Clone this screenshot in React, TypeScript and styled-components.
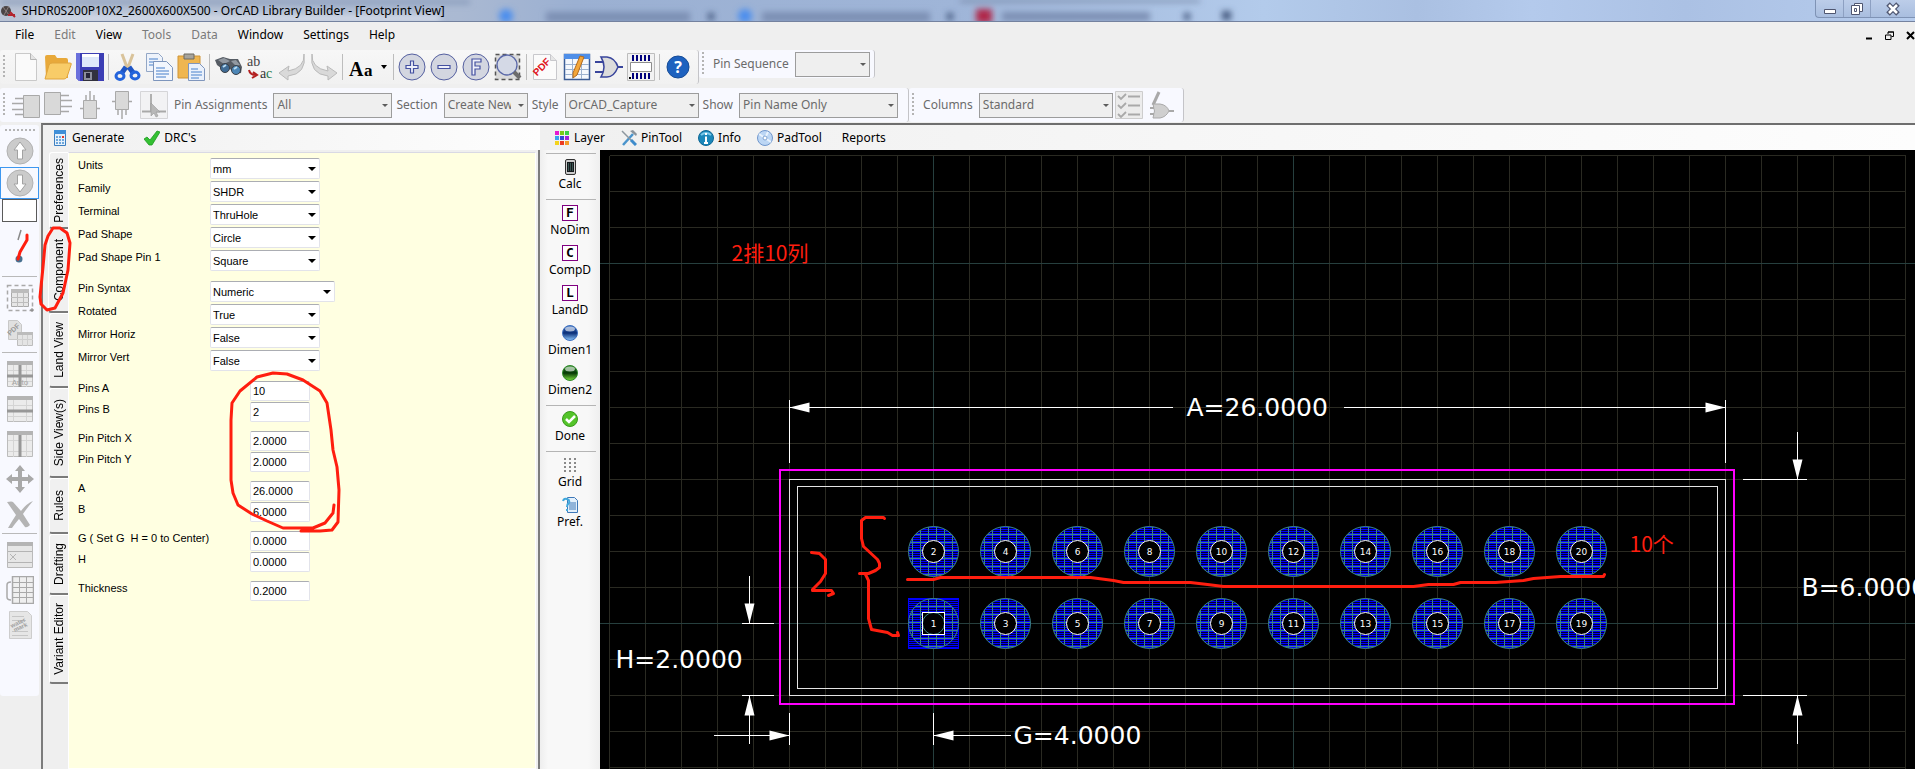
import React from "react";
import styled, { createGlobalStyle, css } from "styled-components";

const UI_FONT = `"Noto Sans", "Open Sans", sans-serif`;
const FORM_FONT = `"Liberation Sans", Arial, sans-serif`;
const RED = "#ff1e0f";

const GlobalStyle = createGlobalStyle`
  * { box-sizing: border-box; }
  body { margin: 0; background: #efefef; }
  button, input, select { font: inherit; color: inherit; margin: 0; }
  button { border: 0; padding: 0; background: none; }
  svg { display: block; flex: none; }
`;

const Window = styled.div`
  position: relative;
  display: flex;
  flex-direction: column;
  min-height: 100vh;
  overflow: hidden;
  background: #efefef;
  font: 12px/16px ${UI_FONT};
  color: #000;
`;

/* ---------- title bar ---------- */

const TitleBar = styled.header`
  position: relative;
  display: flex;
  align-items: flex-start;
  height: 22px;
  overflow: hidden;
  border-bottom: 1px solid #74829f;
  background: linear-gradient(90deg, #b9c3d4 0, #aab9d2 24%, #9bb0d2 30%, #9fb5d8 50%, #b3cbeb 66%, #aac0e2 74%, #b4caec 80%, #abc1e4 88%, #b6cced 100%);
`;

const Backdrop = styled.svg`
  position: absolute;
  left: 0;
  top: 0;
  width: 100%;
  height: 21px;
`;

const AppTitle = styled.h1`
  position: relative;
  display: flex;
  align-items: center;
  gap: 6px;
  flex: 1;
  margin: 0;
  height: 21px;
  font-size: 12px;
  font-weight: 400;
  white-space: pre;
`;

const WindowControls = styled.div`
  position: relative;
  display: flex;
  height: 18px;
  border: 1px solid #7f93b5;
  border-top: 0;
  border-right: 0;
  border-radius: 0 0 0 4px;
  background: linear-gradient(#bccde9, #a9bedf);
`;

const WindowButton = styled.button<{ $wide?: boolean }>`
  display: flex;
  justify-content: center;
  align-items: center;
  width: ${(p) => (p.$wide ? 45 : 27)}px;
  & + & { border-left: 1px solid #8da0c2; }
`;

/* ---------- menu ---------- */

const MenuBar = styled.nav`
  display: flex;
  align-items: center;
  height: 28px;
  padding: 0 0 2px 5px;
`;

const MenuItem = styled.button`
  padding: 0 10px;
  &:disabled { color: #7a7a7a; }
`;

const DocumentControls = styled.div`
  display: flex;
  gap: 12px;
  margin-left: auto;
`;

/* ---------- toolbars ---------- */

const ToolbarRow = styled.div`
  display: flex;
  align-items: flex-start;
  height: 38px;
`;

const Toolbar = styled.div<{ $tone?: "gray"; $short?: boolean; $end?: number }>`
  display: flex;
  align-items: center;
  height: ${(p) => (p.$short ? 28 : 34)}px;
  padding-right: ${(p) => p.$end ?? 4}px;
  border-right: 1px solid #c4c4c8;
  border-radius: 3px;
  background: ${(p) => (p.$tone === "gray" ? "linear-gradient(#f7f7f7, #f1f1f1)" : "#f8f9ff")};
  color: #6b6b6b;
`;

const Grip = styled.i`
  width: 2px;
  height: 24px;
  margin: 0 5px 0 3px;
  background: repeating-linear-gradient(#b4b4b4 0 2px, transparent 2px 4px);
`;

const ToolButton = styled.button<{ $narrow?: boolean }>`
  display: flex;
  justify-content: center;
  align-items: center;
  width: ${(p) => (p.$narrow ? 14 : 32)}px;
  height: 32px;
`;

const ToolSeparator = styled.i`
  width: 1px;
  height: 26px;
  margin: 0 2px;
  background: #bdbdbd;
`;

const ToolLabel = styled.label`
  margin: 0 6px 0 4px;
  white-space: nowrap;
`;

const ToolSelectBox = styled.span<{ $width: number }>`
  position: relative;
  width: ${(p) => p.$width}px;
  height: 25px;
  &::after {
    content: "";
    position: absolute;
    right: 4px;
    top: 11px;
    border: 3px solid transparent;
    border-top-color: #5c5c5c;
  }
`;

const ToolSelectInput = styled.select`
  appearance: none;
  width: 100%;
  height: 100%;
  padding: 0 16px 0 3px;
  border: 1px solid #9c9c9c;
  border-radius: 0;
  background: #efefef;
  color: #6b6b6b;
  opacity: 1;
`;

/* ---------- workspace ---------- */

const Workspace = styled.div`
  display: flex;
  flex: 1;
  margin-top: -3px;
`;

const Rail = styled.aside`
  display: flex;
  flex-direction: column;
  align-items: center;
  align-self: flex-start;
  width: 39px;
  margin: 2px 2px 0 0;
  padding-bottom: 54px;
  border-radius: 3px;
  background: #f8f9ff;
`;

const RailGrip = styled.i`
  width: 30px;
  height: 2px;
  margin: 4px 0;
  background: repeating-linear-gradient(90deg, #b4b4b4 0 2px, transparent 2px 4px);
`;

const RailButton = styled.button<{ $active?: boolean; $tall?: boolean }>`
  display: flex;
  justify-content: center;
  align-items: center;
  width: 39px;
  height: ${(p) => (p.$tall ? 52 : 35)}px;
  ${(p) =>
    p.$active !== undefined &&
    css`
      height: 32px;
      border: 1px solid ${p.$active ? "#3d97f0" : "transparent"};
    `}
`;

const RailInput = styled.input`
  width: 35px;
  height: 23px;
  border: 1px solid #5a5a5a;
  background: #fff;
`;

const RailSeparator = styled.i`
  width: 35px;
  height: 1px;
  margin: 2px 0 3px;
  background: #b9b9b9;
`;

const Frame = styled.main`
  display: flex;
  flex: 1;
  min-width: 0;
  border-top: 2px solid #6e6e6e;
  border-left: 2px solid #7c7c7c;
`;

const SidePanel = styled.section`
  display: flex;
  flex-direction: column;
  width: 497px;
  flex: none;
`;

const PaneHeader = styled.div<{ $pad: number }>`
  display: flex;
  align-items: center;
  height: 25px;
  padding-left: ${(p) => p.$pad}px;
  background: linear-gradient(90deg, #f0f0f0, #fdfdfd);
`;

const PaneButton = styled.button`
  display: flex;
  align-items: center;
  gap: 4px;
  margin-right: 16px;
  &:last-child { margin-left: 4px; }
`;

const PanelBody = styled.div`
  display: flex;
  flex: 1;
  padding: 2px 1px 0 5px;
  border-right: 2px solid #7c7c7c;
  background: #efefef;
`;

const TabStrip = styled.div`
  display: flex;
  flex-direction: column;
  align-items: flex-end;
  width: 20px;
`;

const SideTab = styled.button<{ $length: number; $selected?: boolean }>`
  display: flex;
  align-items: center;
  justify-content: center;
  width: ${(p) => (p.$selected ? 20 : 19)}px;
  height: ${(p) => p.$length}px;
  border-top: 1px solid #fff;
  border-left: 1px solid #fff;
  border-bottom: 2px solid #7a7a7a;
  border-radius: 3px 0 0 3px;
  background: #f0f0f0;
  font: 12px/16px ${FORM_FONT};
`;

const TabText = styled.span`
  writing-mode: vertical-rl;
  transform: rotate(180deg);
  white-space: nowrap;
`;

const Form = styled.form`
  display: flex;
  flex-direction: column;
  gap: 8px;
  flex: 1;
  margin-right: 1px;
  padding: 5px 0 0 9px;
  border: 1px solid #fff;
  border-top: 1px solid #d9d9e4;
  background: #ffffe1;
  font: 11px/14px ${FORM_FONT};
`;

const FieldGroup = styled.div`
  display: grid;
`;

const Row = styled.div<{ $kind: "select" | "input" }>`
  display: grid;
  grid-template-columns: ${(p) => (p.$kind === "select" ? 132 : 172)}px auto;
  justify-content: start;
  height: ${(p) => (p.$kind === "select" ? 23 : 21)}px;
`;

const FieldSelectBox = styled.span<{ $wide?: boolean }>`
  position: relative;
  width: ${(p) => (p.$wide ? 125 : 110)}px;
  height: 21px;
  &::after {
    content: "";
    position: absolute;
    right: 4px;
    top: 9px;
    border: 4px solid transparent;
    border-top-color: #000;
    border-bottom-width: 0;
  }
`;

const boxStyle = css`
  width: 100%;
  border: 1px solid #e2e3ea;
  border-top-color: #abadb3;
  border-radius: 2px;
  background: #fff;
`;

const FieldSelect = styled.select`
  ${boxStyle}
  appearance: none;
  height: 21px;
  padding: 0 14px 0 2px;
`;

const FieldInput = styled.input`
  ${boxStyle}
  width: 60px;
  height: 20px;
  padding: 0 2px;
`;

/* ---------- drawing pane ---------- */

const DrawingPane = styled.section`
  display: flex;
  flex-direction: column;
  flex: 1;
  min-width: 0;
`;

const DrawingBody = styled.div`
  display: flex;
  flex: 1;
`;

const ToolStrip = styled.div`
  display: flex;
  flex-direction: column;
  width: 60px;
  flex: none;
  padding-left: 4px;
  background: linear-gradient(90deg, #eeeeee 0, #f8f8f8 8px, #f8f8f8 48px, #efefef 100%);
`;

const StripSeparator = styled.i`
  width: 50px;
  height: 1px;
  margin: 3px 0 2px 2px;
  background: #b5b5b5;
`;

const StripButton = styled.button`
  display: flex;
  flex-direction: column;
  align-items: center;
  gap: 1px;
  width: 52px;
  height: 40px;
  padding-top: 3px;
`;

const LetterBox = styled.b`
  width: 16px;
  height: 16px;
  border: 1px solid #800080;
  background: #fff;
  font: bold 13px/14px "DejaVu Sans Mono", monospace;
`;

const Canvas = styled.svg`
  flex: 1 1 0;
  width: 0;
  min-width: 0;
  background: #000;
  overflow: hidden;
`;

const DimText = styled.text`
  font: 25px "DejaVu Sans", Verdana, sans-serif;
  fill: #fff;
`;

const PinText = styled.text`
  font: 9px "DejaVu Sans", Verdana, sans-serif;
  fill: #fff;
  text-anchor: middle;
`;

const NoteText = styled.text`
  font: 21px "Noto Sans CJK SC", sans-serif;
  fill: ${RED};
`;

const MarkupLayer = styled.svg`
  position: absolute;
  left: 0;
  top: 0;
  width: 100%;
  height: 100%;
  pointer-events: none;
`;

const Pen = styled.path`
  fill: none;
  stroke: ${RED};
  stroke-width: 3px;
  stroke-linecap: round;
  stroke-linejoin: round;
`;

/* ---------- icons ---------- */

const Icon = ({ size = 28, children }: { size?: number; children: React.ReactNode }) => (
  <svg width={size} height={size} viewBox={`0 0 ${size} ${size}`} fill="none" aria-hidden="true">
    {children}
  </svg>
);

const NewIcon = () => (
  <Icon>
    <path d="M3.500 .5h15l6 6v21h-21z" fill="#fafafa" stroke="#c9c9c9" />
    <path d="M18.500 .5v6h6" fill="#e4e4e4" stroke="#b5b5b5" />
  </Icon>
);
const OpenIcon = () => (
  <Icon>
    <path d="M1 4q0-2 2-2h8l2 3h9q2 0 2 2v18H2z" fill="#e8a93a" />
    <path d="M5 12q1-2 3-2h18q2 0 1 2l-4 12q-1 2-3 2H1z" fill="#f8cc68" stroke="#e0a43c" />
  </Icon>
);
const SaveIcon = () => (
  <Icon>
    <path d="M0 0h28v28H3l-3-3z" fill="#3c3eb4" />
    <path d="M0 0h4v28H3l-3-3z" fill="#6a70dc" />
    <path d="M6 1h17v13H6z" fill="#dfe9fa" />
    <path d="M6 1h17v3H6z" fill="#fff" />
    <path d="M7 17h15v11H7z" fill="#31313d" />
    <path d="M8 19h8v8H8z" fill="#8d8f9c" />
    <path d="M10 20h4v5h-4z" fill="#26263a" />
  </Icon>
);
const CutIcon = () => (
  <Icon>
    <path d="M9 1l6 16M20 1l-6 16" stroke="#d9c39a" strokeWidth="3" />
    <path d="M13 14l-5 7M16 14l5 7" stroke="#1f55c4" strokeWidth="5" />
    <ellipse cx="7" cy="23" rx="4" ry="3.500" stroke="#2464dc" strokeWidth="3" />
    <ellipse cx="22" cy="22.500" rx="4" ry="3.500" stroke="#2464dc" strokeWidth="3" />
  </Icon>
);
const CopyIcon = () => (
  <Icon>
    <path d="M1.500 .5h12l4 4v14h-16z" fill="#eef3fb" stroke="#93a7c6" />
    <path d="M4 6h9M4 9h11M4 12h8" stroke="#7fa6dc" strokeWidth="1.500" />
    <path d="M8.500 8.500h13l6 6v13h-19z" fill="#f2f6fd" stroke="#7d95bc" />
    <path d="M11 15h9M11 18h13M11 21h13M11 24h10" stroke="#7fa6dc" strokeWidth="1.500" />
  </Icon>
);
const PasteIcon = () => (
  <Icon>
    <path d="M1 3h22v22H1z" fill="#efb650" stroke="#cf9436" />
    <path d="M7 1h10v5H7z" fill="#a7a49c" stroke="#6e6a60" />
    <path d="M11.500 10.500h11l5 5v12h-16z" fill="#eaf1fc" stroke="#8096bc" />
    <path d="M14 16h7M14 19h11M14 22h11M14 25h8" stroke="#7fa6dc" strokeWidth="1.500" />
  </Icon>
);
const FindIcon = () => (
  <Icon>
    <path d="M1 7l8-3 7 2 8 0 4 8-1 6-6 1-5-5-5 2-8-6z" fill="#565c64" />
    <path d="M4 7l6-2 6 3-6 3zM17 8l5-1 4 5-4 1z" fill="#9299a1" />
    <circle cx="11" cy="15" r="4.500" fill="#3f6b94" stroke="#3a3f46" />
    <circle cx="22" cy="17" r="4.500" fill="#4c86b6" stroke="#3a3f46" />
    <path d="M9 14l3-2M20 16l3-2" stroke="#b9dcf2" strokeWidth="2" />
  </Icon>
);
const ReplaceIcon = () => (
  <Icon>
    <text x="1" y="13" fontFamily="Liberation Serif, serif" fontSize="14" fill="#444">ab</text>
    <text x="14" y="25" fontFamily="Liberation Serif, serif" fontSize="14" fill="#333">a</text>
    <text x="20" y="25" fontFamily="Liberation Serif, serif" fontSize="14" fill="#1d7a4a">c</text>
    <path d="M3 17q1 5 7 5m-3-3l4 3-5 3" stroke="#b32020" strokeWidth="2" />
  </Icon>
);
const UndoIcon = () => (
  <Icon>
    <path d="M26 1q1 14-16 17l1-5L1 20l9 7v-4Q29 21 26 1z" fill="#d9d9d9" stroke="#bababa" />
  </Icon>
);
const RedoIcon = () => (
  <Icon>
    <path d="M2 1q-1 14 16 17l-1-5 10 7-9 7v-4Q-1 21 2 1z" fill="#d9d9d9" stroke="#bababa" />
  </Icon>
);
const FontIcon = () => (
  <Icon>
    <text x="2" y="23" fontFamily="Liberation Serif, serif" fontWeight="700" fontSize="20" fill="#000">A</text>
    <text x="17" y="23" fontFamily="Liberation Serif, serif" fontWeight="700" fontSize="17" fill="#000">a</text>
  </Icon>
);
const RoundIcon = ({ d }: { d: string }) => (
  <Icon>
    <circle cx="14" cy="14" r="13" fill="#d3d6e0" stroke="#5560a0" />
    <path d={d} fill="#eef0fa" stroke="#4450a0" strokeWidth="1.200" />
  </Icon>
);
const ZoomAreaIcon = () => (
  <Icon>
    <path d="M1.500 1.500h24v25h-24z" fill="#dadada" stroke="#555" strokeWidth="1.500" strokeDasharray="4 3" />
    <circle cx="13" cy="12" r="10" fill="#d4d9e6" stroke="#5a68a8" strokeWidth="1.300" />
    <path d="M20 19l6 6" stroke="#6c6c6c" strokeWidth="4" />
  </Icon>
);
const PdfIcon = () => (
  <Icon>
    <path d="M2.500 1.500h17l6 6v19h-23z" fill="#fbfbfb" stroke="#c8c8cc" />
    <path d="M19.500 1.500v6h6" fill="#e6e6e6" stroke="#c8c8cc" />
    <text x="5" y="23" transform="rotate(-45 6 22)" fontFamily="Liberation Sans, sans-serif" fontWeight="700" fontSize="10" fill="#e0141c">PDF</text>
  </Icon>
);
const TableEditIcon = () => (
  <Icon>
    <path d="M1.500 1.500h25v25h-25z" fill="#f5f8fd" stroke="#3c5d96" strokeWidth="1.500" />
    <path d="M1 1h26v5H1z" fill="#4f8fe8" />
    <path d="M2 11.500h24M2 16.500h24M2 21.500h24M9.500 6v20M18.500 6v20" stroke="#9db2cf" />
    <path d="M17 3l4 1-7 18-4 3 0-5z" fill="#f3a63a" stroke="#b36a1c" />
  </Icon>
);
const GateIcon = () => (
  <Icon>
    <path d="M6 4h6q8 1 11 10-4 10-11 10H6q6-10 0-20z" fill="#dcdcdc" stroke="#39459c" strokeWidth="1.500" />
    <path d="M0 9h8M0 19h8M23 14h5" stroke="#39459c" strokeWidth="1.800" />
  </Icon>
);
const ChipIcon = () => (
  <Icon>
    <path d="M.5 .5h27v27H.5z" fill="#f2f2f2" stroke="#bdbdbd" />
    <path d="M6 2v6M10 2v6M14 2v6M18 2v6M22 2v6M6 20v6M10 20v6M14 20v6M18 20v6M22 20v6" stroke="#00007c" strokeWidth="2" />
    <path d="M3.500 9.500h21v9h-21z" fill="#fff" stroke="#8d8d8d" />
    <path d="M2 24h2v2H2z" fill="#000" />
  </Icon>
);
const HelpIcon = () => (
  <Icon>
    <circle cx="14" cy="14" r="11" fill="#1e62bf" stroke="#174c96" />
    <text x="14" y="20" textAnchor="middle" fontFamily="Open Sans, sans-serif" fontWeight="700" fontSize="16" fill="#fff">?</text>
  </Icon>
);
const GRAY = "#a9a9a9";
const PinSideIcon = ({ turn }: { turn: number }) => (
  <Icon>
    <g transform={`rotate(${turn} 14 14)`}>
      <path d="M3 7.500h9M0 12.500h12M0 18.500h12M3 23.500h9" stroke={GRAY} strokeWidth="1.500" />
      <path d="M11.500 4.500h16v22h-16z" fill="#d9d9d9" stroke={GRAY} />
    </g>
  </Icon>
);
const PinEndIcon = ({ turn }: { turn: number }) => (
  <Icon>
    <g transform={`rotate(${turn} 14 14)`}>
      <path d="M10 4v6M14 0v10M18 4v6M4 17.500h4M20 17.500h4" stroke={GRAY} strokeWidth="1.500" />
      <path d="M7.500 9.500h13v18h-13z" fill="#d9d9d9" stroke={GRAY} />
    </g>
  </Icon>
);
const CursorIcon = () => (
  <Icon>
    <path d="M.5 .5h27v27H.5z" fill="#f2f2f4" stroke="#d5d5d8" />
    <path d="M11 3v17M2 20.500h24" stroke={GRAY} strokeWidth="1.800" />
    <path d="M11 12v13l3-3 2 4 2-1-2-4h4z" fill="#b8b8b8" stroke="#999" strokeWidth=".6" />
  </Icon>
);
const ChecklistIcon = () => (
  <Icon>
    <path d="M.5 .5h27v27H.5z" fill="#ececec" stroke="#cdcdcd" />
    <path d="M3 5l3 3 5-5M3 14l3 3 5-5M3 23l3 3 5-5M13 5.500h12M13 14.500h12M13 23.500h12" stroke={GRAY} strokeWidth="1.800" />
  </Icon>
);
const GrayGateIcon = () => (
  <Icon>
    <path d="M12 1L6 14" stroke={GRAY} strokeWidth="3" />
    <path d="M6 13h7q7 1 9 7-3 6-9 7H6q3-7 0-14z" fill="#cfcfcf" stroke={GRAY} />
    <path d="M3 17h4M3 23h4M22 20h5" stroke={GRAY} strokeWidth="2" />
  </Icon>
);
const ArrowCircle = ({ down }: { down?: boolean }) => (
  <Icon>
    <circle cx="14" cy="14" r="13" fill="#cbcbcb" stroke="#b2b2b2" />
    <path transform={down ? "rotate(180 14 14)" : undefined} d="M14 5l6 8h-3.500v9h-5v-9H8z" fill="#fff" stroke="#a2a2a2" />
  </Icon>
);
const BrushIcon = () => (
  <svg width="28" height="50" viewBox="0 0 28 50" aria-hidden="true">
    <path d="M15 7l-3 10" stroke="#888" strokeWidth="1.500" />
    <circle cx="13" cy="36" r="3.500" fill="#47708f" />
  </svg>
);
const RailIcon = ({ kind }: { kind: string }) => (
  <Icon>
    {kind === "grid" && (
      <>
        <path d="M1.500 1.500h25v25h-25z" stroke={GRAY} strokeWidth="1.500" strokeDasharray="4 3" />
        <path d="M5.500 5.500h17v17h-17z" fill="#e6e6e6" stroke={GRAY} />
        <path d="M5 5h18v4H5z" fill="#bcbcbc" />
        <path d="M5 13.500h18M5 18.500h18M11.500 9v14M17.500 9v14" stroke="#bdbdbd" />
        <path d="M24 26h4M26 24v4" stroke="#888" />
      </>
    )}
    {kind === "pdf" && (
      <>
        <path d="M2.500 1.500h9l4 4v15h-13z" fill="#e0e0e0" stroke="#c8c8c8" />
        <text x="3" y="16" transform="rotate(-45 5 15)" fontFamily="Liberation Sans, sans-serif" fontWeight="700" fontSize="7" fill="#999">PDF</text>
        <path d="M11.500 13.500h15v13h-15z" fill="#e4e4e4" stroke="#bdbdbd" />
        <path d="M11 13h16v3H11z" fill="#bcbcbc" />
        <path d="M11 20.500h16M16.500 16v11M21.500 16v11" stroke="#cfcfcf" />
      </>
    )}
    {["auto", "rows", "cols"].includes(kind) && (
      <>
        <path d="M1.500 1.500h25v25h-25z" fill="#ebebeb" stroke="#bcbcbc" />
        <path d="M1 1h26v4H1z" fill="#b4b4b4" />
        <path d="M2 10.500h24M2 21.500h24M7.500 5v22M20.500 5v22" stroke="#d4d4d4" />
      </>
    )}
    {(kind === "auto" || kind === "rows") && <path d="M1 16h26" stroke="#979797" strokeWidth="3" />}
    {(kind === "auto" || kind === "cols") && <path d="M14 5v22" stroke="#979797" strokeWidth="3" />}
    {kind === "auto" && (
      <text x="14" y="25" textAnchor="middle" fontFamily="Liberation Sans, sans-serif" fontSize="8" fill="#a5a5a5">Auto</text>
    )}
    {kind === "move" && (
      <path d="M14 0l5 6h-3v6h6V9l6 5-6 5v-3h-6v6h3l-5 6-5-6h3v-6H6v3l-6-5 6-5v3h6V6H9z" fill={GRAY} />
    )}
    {kind === "delete" && <path d="M1 2q5-1 6 0l8 9q5-7 12-10-6 7-10 13l7 11q-3 3-5 2l-6-8q-5 6-7 9H2q4-7 8-13z" fill="#b4b4b4" />}
    {kind === "form" && (
      <>
        <path d="M1.500 1.500h25v25h-25z" fill="#e6e6e6" stroke="#bababa" />
        <path d="M1 1h26v4H1z" fill="#b4b4b4" />
        <path d="M2 10.500h24M2 21.500h24M4 13l6 6M10 13l-6 6" stroke="#b4b4b4" />
      </>
    )}
    {kind === "sheet" && (
      <>
        <path d="M6.500 .5h21v27h-21z" fill="#efefef" stroke={GRAY} strokeWidth="1.500" />
        <path d="M6 6.500h22M6 11.500h22M6 16.500h22M6 21.500h22M13.500 1v27M20.500 1v27" stroke={GRAY} />
        <path d="M5 6q-4 0-4 3v12q0 3 4 3" stroke={GRAY} strokeWidth="1.500" />
      </>
    )}
    {kind === "watermark" && (
      <>
        <path d="M3.500 .5h18l4 4v23h-22z" fill="#e6e6e6" stroke="#cdcdcd" />
        <path d="M6 5.500h12M6 9.500h14M6 20.500h16M6 24.500h16" stroke="#c6c6c6" />
        <text x="6" y="16" transform="rotate(-25 12 14)" fontFamily="Liberation Sans, sans-serif" fontWeight="700" fontSize="6" fill="#a0a0a0">
          <tspan x="5" y="14">water</tspan>
          <tspan x="6" y="19">mark</tspan>
        </text>
      </>
    )}
  </Icon>
);

const GenerateIcon = () => (
  <Icon size={16}>
    <path d="M2.500 .5h11v15h-11z" fill="#e6f1fb" stroke="#3d7fc0" />
    <path d="M2 0h12v4H2z" fill="#3f8fd8" />
    <path d="M4 6h2v2H4zM7 6h2v2H7zM4 9h2v2H4zM7 9h2v2H7zM10 9h2v2h-2zM4 12h2v2H4zM7 12h2v2H7zM10 12h2v2h-2z" fill="#6da7dc" />
    <path d="M10 6h2v2h-2z" fill="#e03a2a" />
  </Icon>
);
const TickIcon = () => (
  <Icon size={16}>
    <path d="M0 9l3-2 3 3 7-9 3 1-8 13H5z" fill="#34c033" stroke="#1d9a20" strokeWidth=".8" />
  </Icon>
);
const LayerIcon = () => (
  <Icon size={16}>
    {["#e51bd0", "#7ac816", "#3ccf46", "#38a3ee", "#3347d6", "#a022dc", "#f3d31c", "#ea3a20", "#f49a24"].map((c, i) => (
      <rect key={c} x={1 + (i % 3) * 5} y={1 + Math.floor(i / 3) * 5} width="4" height="4" fill={c} />
    ))}
  </Icon>
);
const PinToolIcon = () => (
  <Icon size={16}>
    <path d="M2 15L12 4" stroke="#4a94cc" strokeWidth="2.500" />
    <path d="M1 1l12 12" stroke="#8d979f" strokeWidth="1.500" />
    <path d="M10 10l5 5" stroke="#3f8ccc" strokeWidth="3" />
    <path d="M9 1l3-1 4 4-1 2z" fill="#8b949c" />
  </Icon>
);
const InfoIcon = () => (
  <Icon size={16}>
    <circle cx="8" cy="8" r="7.500" fill="#1b87ba" stroke="#0f6794" />
    <path d="M3 5q5-4 10 0" stroke="#7cc9ea" strokeWidth="2" />
    <path d="M8 3v2M8 6.500v6.500M6 13h4" stroke="#fff" strokeWidth="2" />
  </Icon>
);
const DiscIcon = () => (
  <Icon size={16}>
    <circle cx="8" cy="8" r="7.500" fill="#bcd6f4" stroke="#6f96cc" />
    <path d="M8 8L2 4M8 8l6 4M8 8l3-6" stroke="#e9f3fd" strokeWidth="2" />
    <circle cx="8" cy="8" r="2" fill="#fff" stroke="#7fa3d2" />
  </Icon>
);
const CalcIcon = () => (
  <Icon size={16}>
    <rect x="3.500" y=".5" width="10" height="15" rx="1.500" fill="#ccc" stroke="#333" />
    <path d="M5 3h7v10H5z" fill="#15191c" />
    <path d="M6 5h5M6 7h5M6 9h5M6 11h5" stroke="#5f9488" strokeDasharray="1 1" />
  </Icon>
);
const BallIcon = ({ id, dark, mid, light }: { id: string; dark: string; mid: string; light: string }) => (
  <Icon size={16}>
    <linearGradient id={id} x1="0" y1="0" x2="0" y2="1">
      <stop offset="0" stopColor={mid} />
      <stop offset=".5" stopColor={dark} />
      <stop offset="1" stopColor={light} />
    </linearGradient>
    <circle cx="8" cy="8" r="7.500" fill={`url(#${id})`} stroke={mid} />
    <ellipse cx="8" cy="4" rx="5" ry="2.500" fill="#fff" opacity=".6" />
  </Icon>
);
const DoneIcon = () => (
  <Icon size={16}>
    <circle cx="8" cy="8" r="7.500" fill="#54c42a" stroke="#3a9a1c" />
    <path d="M4 8l3 3 6-6" stroke="#fff" strokeWidth="2.500" />
  </Icon>
);
const DotsIcon = () => (
  <Icon size={16}>
    {[0, 1, 2, 3].flatMap((r) =>
      [0, 1, 2].map((c) => <rect key={`${r}${c}`} x={2 + c * 5} y={1 + r * 4} width="2" height="2" fill="#8a8a8a" />)
    )}
  </Icon>
);
const PrefIcon = () => (
  <Icon size={16}>
    <path d="M5.500 .5h7l3 3v12h-10z" fill="#e4f0fb" stroke="#3e78b8" />
    <path d="M7 6h7M7 8h7M7 10h7M7 12h7" stroke="#3e78b8" />
    <path d="M1 4q1-3 4-2t2 4q-2 1-2 4M5 12v2" stroke="#42a8dc" strokeWidth="2" />
  </Icon>
);

/* ---------- pieces ---------- */

function ToolSelect({ id, label, width, value }: { id: string; label: string; width: number; value: string }) {
  return (
    <>
      <ToolLabel htmlFor={id}>{label}</ToolLabel>
      <ToolSelectBox $width={width}>
        <ToolSelectInput id={id} disabled>
          <option>{value}</option>
        </ToolSelectInput>
      </ToolSelectBox>
    </>
  );
}

type Field = { label: string; value: string; wide?: boolean };

const selectGroups: Field[][] = [
  [
    { label: "Units", value: "mm" },
    { label: "Family", value: "SHDR" },
    { label: "Terminal", value: "ThruHole" },
    { label: "Pad Shape", value: "Circle" },
    { label: "Pad Shape Pin 1", value: "Square" },
  ],
  [
    { label: "Pin Syntax", value: "Numeric", wide: true },
    { label: "Rotated", value: "True" },
    { label: "Mirror Horiz", value: "False" },
    { label: "Mirror Vert", value: "False" },
  ],
];

const inputGroups: Field[][] = [
  [{ label: "Pins A", value: "10" }, { label: "Pins B", value: "2" }],
  [{ label: "Pin Pitch X", value: "2.0000" }, { label: "Pin Pitch Y", value: "2.0000" }],
  [{ label: "A", value: "26.0000" }, { label: "B", value: "6.0000" }],
  [{ label: "G ( Set G \u00a0H = 0 to Center)", value: "0.0000" }, { label: "H", value: "0.0000" }],
  [{ label: "Thickness", value: "0.2000" }],
];

const tabs = [
  { name: "Preferences", length: 77 },
  { name: "Component", length: 84 },
  { name: "Land View", length: 75 },
  { name: "Side View(s)", length: 90 },
  { name: "Rules", length: 56 },
  { name: "Drafting", length: 61 },
  { name: "Variant Editor", length: 89 },
];

const idOf = (label: string) => "field-" + label.replace(/[^A-Za-z0-9]+/g, "-");

function ComponentForm() {
  return (
    <Form>
      {selectGroups.map((group, g) => (
        <FieldGroup key={g}>
          {group.map((f) => (
            <Row key={f.label} $kind="select">
              <label htmlFor={idOf(f.label)}>{f.label}</label>
              <FieldSelectBox $wide={f.wide}>
                <FieldSelect id={idOf(f.label)}>
                  <option>{f.value}</option>
                </FieldSelect>
              </FieldSelectBox>
            </Row>
          ))}
        </FieldGroup>
      ))}
      {inputGroups.map((group, g) => (
        <FieldGroup key={g}>
          {group.map((f) => (
            <Row key={f.label} $kind="input">
              <label htmlFor={idOf(f.label)}>{f.label}</label>
              <FieldInput id={idOf(f.label)} defaultValue={f.value} />
            </Row>
          ))}
        </FieldGroup>
      ))}
    </Form>
  );
}

/* The drawing uses pin 1 as its origin; one millimetre is 36 pixels. */
const MM = 36;
const steps = (from: number, to: number) => Array.from({ length: to - from + 1 }, (_, i) => (from + i) * MM);

const Arrow = ({ x, y, turn }: { x: number; y: number; turn: number }) => (
  <path d="M0 0L20 -5V5Z" fill="#fff" transform={`translate(${x} ${y}) rotate(${turn})`} />
);

function Footprint() {
  return (
    <Canvas role="img" aria-label="Footprint drawing">
      <defs>
        <pattern id="copper" width="4" height="2" patternUnits="userSpaceOnUse" y="-.5">
          <rect width="4" height="2" fill="#000030" />
          <rect width="4" height="1" fill="#0000ff" />
        </pattern>
        <pattern id="mask" width="8" height="8" patternUnits="userSpaceOnUse" x="2.500" y="6.500">
          <path d="M0 .5H8M.5 0V8" stroke="#3b8484" />
        </pattern>
      </defs>
      <g transform="translate(333.5 473.5)">
        <g stroke="#2a2a22" shapeRendering="crispEdges">
          {steps(-9, 27).map((x) => <line key={x} x1={x} x2={x} y1={-468} y2={300} />)}
          {steps(-13, 8).map((y) => <line key={y} x1={-324} x2={972} y1={y} y2={y} />)}
        </g>
        <g stroke="#263f3e" shapeRendering="crispEdges">
          {[0, 360].map((x) => <line key={x} x1={x} x2={x} y1={-468} y2={300} />)}
          {[-360, 0].map((y) => <line key={y} x1={-334} x2={2000} y1={y} y2={y} />)}
        </g>

        <g shapeRendering="crispEdges" fill="none">
          <rect x="-153.5" y="-153.5" width="954" height="234" stroke="#ff00ff" strokeWidth="2" />
          <rect x="-144" y="-144" width="936" height="216" stroke="#e4e4e4" />
          <rect x="-136" y="-137" width="920" height="202" stroke="#e4e4e4" />
        </g>

        {Array.from({ length: 20 }, (_, i) => {
          const x = Math.floor(i / 2) * 2 * MM;
          const y = i % 2 ? -2 * MM : 0;
          return (
            <g key={i}>
              {i === 0 ? (
                <rect x="-25" y="-25" width="50" height="50" fill="url(#copper)" stroke="#0000ff" shapeRendering="crispEdges" />
              ) : (
                <circle cx={x} cy={y} r="25" fill="url(#copper)" />
              )}
              <circle cx={x} cy={y} r="25" fill="url(#mask)" stroke="#3b8484" />
              {i === 0 && <rect x="-11" y="-11" width="22" height="22" fill="#000" />}
              <circle cx={x} cy={y} r="11" fill="#000" stroke={i === 0 ? "#3b8484" : "#fff"} />
              {i === 0 && <rect x="-11" y="-11" width="22" height="22" fill="none" stroke="#fff" shapeRendering="crispEdges" />}
              <PinText x={x} y={y + 3}>{i + 1}</PinText>
            </g>
          );
        })}

        <g stroke="#fff" shapeRendering="crispEdges">
          <path fill="none" d="M-144-224V-161M792-224V-161M-144-216H239M410-216H792" />
          <path fill="none" d="M809-144H873M809 72H873M864-192V-144M864 72V120" />
          <path fill="none" d="M-192 0H-160M-192 72H-160M-184-48V0M-184 72V120" />
          <path fill="none" d="M-144 89V121M0 89V121M-220 112H-144M0 112H77" />
        </g>
        <Arrow x={-144} y={-216} turn={0} />
        <Arrow x={792} y={-216} turn={180} />
        <Arrow x={864} y={-144} turn={-90} />
        <Arrow x={864} y={72} turn={90} />
        <Arrow x={-184} y={0} turn={-90} />
        <Arrow x={-184} y={72} turn={90} />
        <Arrow x={-144} y={112} turn={180} />
        <Arrow x={0} y={112} turn={0} />
        <DimText x="253" y="-208">A=26.0000</DimText>
        <DimText x="868" y="-28">B=6.0000</DimText>
        <DimText x="-318" y="44">H=2.0000</DimText>
        <DimText x="80" y="120">G=4.0000</DimText>

        <NoteText x="-202" y="-363">2排10列</NoteText>
        <NoteText x="696" y="-72">10个</NoteText>
        <Pen d="M-122-71L-114-70-108-64V-50L-113-42-121-34V-33H-102L-100-30-105-28" />
        <Pen d="M-49-105L-50-106H-68L-72-103V-85L-70-77-56-64-54-60-54-56-58-53-65-50H-74M-68-49L-65-43V-5L-62 6-46 9-41 12H-35L-36 9" />
        <Pen d="M-26-44H0L7-46H157L180-43 190-41H257L274-39 290-37H480L495-39H520L527-41H562L590-43 600-45 627-47H670L671-49" />
      </g>
    </Canvas>
  );
}

const menus: [string, boolean][] = [
  ["File", true], ["Edit", false], ["View", true], ["Tools", false],
  ["Data", false], ["Window", true], ["Settings", true], ["Help", true],
];

const Tool = ({ name, children }: { name: string; children: React.ReactNode }) => (
  <ToolButton type="button" aria-label={name}>{children}</ToolButton>
);

export default function App() {
  return (
    <Window>
      <GlobalStyle />
      <TitleBar>
        <Backdrop aria-hidden="true">
          <filter id="glass" x="-20%" y="-100%" width="140%" height="300%">
            <feGaussianBlur stdDeviation="3" />
          </filter>
          <g filter="url(#glass)">
            <path d="M0 0H470V4H0z" fill="#8497b8" />
            <path d="M960 0H1200V2H960z" fill="#62718f" />
            <path d="M30 15H440V22H30z" fill="#d5dce8" />
            <path d="M546 12H690V22H546zM762 12H930V22H762zM1002 12H1150V21H1002z" fill="#7b8fb3" />
            <circle cx="506" cy="16" r="7" fill="#4c8eee" />
            <circle cx="745" cy="16" r="7" fill="#4c8eee" />
            <path d="M976 9h16v14h-16z" fill="#b02848" />
            <path d="M708 13h6v7h-6zM947 13h6v7h-6zM1184 13h6v7h-6zM1222 11h9v9h-9z" fill="#43577c" />
          </g>
        </Backdrop>
        <AppTitle>
          <Icon size={16}>
            <circle cx="6" cy="8" r="5" fill="#4a4444" />
            <path d="M3 4l6 8M9 3l-5 9" stroke="#8b7e7e" />
            <path d="M8 12h7M10 9l5 5" stroke="#b3242c" strokeWidth="2" />
          </Icon>
          SHDR0S200P10X2_2600X600X500 - OrCAD Library Builder - [Footprint View]
        </AppTitle>
        <WindowControls>
          <WindowButton type="button" aria-label="Minimize">
            <Icon size={14}><path d="M1.500 7.500h11v4h-11z" fill="#fff" stroke="#4f5670" /></Icon>
          </WindowButton>
          <WindowButton type="button" aria-label="Restore">
            <Icon size={14}>
              <path d="M4.500 1.500h8v8h-8z" fill="#fff" stroke="#4f5670" />
              <path d="M1.500 3.500h8v9h-8z" fill="#fff" stroke="#4f5670" />
              <path d="M4.500 6.500h2v3h-2z" stroke="#4f5670" />
            </Icon>
          </WindowButton>
          <WindowButton type="button" aria-label="Close" $wide>
            <Icon size={14}>
              <path d="M2 2l10 10M12 2L2 12" stroke="#4f5670" strokeWidth="5" />
              <path d="M3 3l8 8M11 3l-8 8" stroke="#fff" strokeWidth="2.500" />
            </Icon>
          </WindowButton>
        </WindowControls>
      </TitleBar>

      <MenuBar>
        {menus.map(([name, enabled]) => (
          <MenuItem key={name} type="button" disabled={!enabled}>{name}</MenuItem>
        ))}
        <DocumentControls>
          <button type="button" aria-label="Minimize document">
            <Icon size={9}><path d="M2 7.500h6" stroke="#000" strokeWidth="2" /></Icon>
          </button>
          <button type="button" aria-label="Restore document">
            <Icon size={9}><path d="M3 3V1h5.500v4.500H6.500M.5 4h5.500v4.500H.5zM3 1h6" stroke="#000" /></Icon>
          </button>
          <button type="button" aria-label="Close document">
            <Icon size={9}><path d="M1 1l7 7M8 1L1 8" stroke="#000" strokeWidth="2" /></Icon>
          </button>
        </DocumentControls>
      </MenuBar>

      <ToolbarRow>
        <Toolbar $tone="gray">
          <Grip />
          <Tool name="New"><NewIcon /></Tool>
          <Tool name="Open"><OpenIcon /></Tool>
          <Tool name="Save"><SaveIcon /></Tool>
          <ToolSeparator />
          <Tool name="Cut"><CutIcon /></Tool>
          <Tool name="Copy"><CopyIcon /></Tool>
          <Tool name="Paste"><PasteIcon /></Tool>
          <ToolSeparator />
          <Tool name="Find"><FindIcon /></Tool>
          <Tool name="Replace"><ReplaceIcon /></Tool>
          <Tool name="Undo"><UndoIcon /></Tool>
          <Tool name="Redo"><RedoIcon /></Tool>
          <ToolSeparator />
          <Tool name="Font"><FontIcon /></Tool>
          <ToolButton type="button" aria-label="Font options" $narrow>
            <Icon size={8}><path d="M1 2h6L4 6z" fill="#000" /></Icon>
          </ToolButton>
          <ToolSeparator />
          <Tool name="Zoom in"><RoundIcon d="M12.500 8h3v4.500H20v3h-4.500V20h-3v-4.500H8v-3h4.500z" /></Tool>
          <Tool name="Zoom out"><RoundIcon d="M8 12.500h12v3H8z" /></Tool>
          <Tool name="Fit"><RoundIcon d="M10 6h9v3h-6v4h5v3h-5v6h-3z" /></Tool>
          <Tool name="Zoom area"><ZoomAreaIcon /></Tool>
          <ToolSeparator />
          <Tool name="PDF"><PdfIcon /></Tool>
          <Tool name="Edit table"><TableEditIcon /></Tool>
          <Tool name="Symbol"><GateIcon /></Tool>
          <Tool name="Footprint"><ChipIcon /></Tool>
          <ToolSeparator />
          <Tool name="Help"><HelpIcon /></Tool>
        </Toolbar>
        <Toolbar $short>
          <Grip />
          <ToolSelect id="pin-sequence" label="Pin Sequence" width={75} value="" />
        </Toolbar>
      </ToolbarRow>

      <ToolbarRow>
        <Toolbar $end={10}>
          <Grip />
          <Tool name="Pins left"><PinSideIcon turn={0} /></Tool>
          <Tool name="Pins right"><PinSideIcon turn={180} /></Tool>
          <Tool name="Pins top"><PinEndIcon turn={0} /></Tool>
          <Tool name="Pins bottom"><PinEndIcon turn={180} /></Tool>
          <Tool name="Place pin"><CursorIcon /></Tool>
          <ToolSelect id="assignments" label="Pin Assignments" width={119} value="All" />
          <ToolSelect id="section" label="Section" width={84} value="Create New Section" />
          <ToolSelect id="style" label="Style" width={134} value="OrCAD_Capture" />
          <ToolSelect id="show" label="Show" width={159} value="Pin Name Only" />
        </Toolbar>
        <Toolbar $end={6}>
          <Grip />
          <ToolSelect id="columns" label="Columns" width={134} value="Standard" />
          <Tool name="Column list"><ChecklistIcon /></Tool>
          <Tool name="Edit symbol"><GrayGateIcon /></Tool>
        </Toolbar>
      </ToolbarRow>

      <Workspace>
        <Rail>
          <RailGrip />
          <RailButton type="button" aria-label="Move up" $active={false}><ArrowCircle /></RailButton>
          <RailButton type="button" aria-label="Move down" $active><ArrowCircle down /></RailButton>
          <RailInput aria-label="Line width" />
          <RailButton type="button" aria-label="Brush" $tall><BrushIcon /></RailButton>
          <RailSeparator />
          {["grid", "pdf"].map((k) => <RailButton key={k} type="button" aria-label={k}><RailIcon kind={k} /></RailButton>)}
          <RailSeparator />
          {["auto", "rows", "cols", "move", "delete"].map((k) => (
            <RailButton key={k} type="button" aria-label={k}><RailIcon kind={k} /></RailButton>
          ))}
          <RailSeparator />
          {["form", "sheet", "watermark"].map((k) => (
            <RailButton key={k} type="button" aria-label={k}><RailIcon kind={k} /></RailButton>
          ))}
        </Rail>

        <Frame>
          <SidePanel>
            <PaneHeader $pad={9}>
              <PaneButton type="button"><GenerateIcon />Generate</PaneButton>
              <PaneButton type="button"><TickIcon />DRC's</PaneButton>
            </PaneHeader>
            <PanelBody>
              <TabStrip role="tablist" aria-orientation="vertical">
                {tabs.map((t) => (
                  <SideTab
                    key={t.name}
                    type="button"
                    role="tab"
                    aria-selected={t.name === "Component"}
                    $selected={t.name === "Component"}
                    $length={t.length}
                  >
                    <TabText>{t.name}</TabText>
                  </SideTab>
                ))}
              </TabStrip>
              <ComponentForm />
            </PanelBody>
          </SidePanel>

          <DrawingPane>
            <PaneHeader $pad={14}>
              <PaneButton type="button"><LayerIcon />Layer</PaneButton>
              <PaneButton type="button"><PinToolIcon />PinTool</PaneButton>
              <PaneButton type="button"><InfoIcon />Info</PaneButton>
              <PaneButton type="button"><DiscIcon />PadTool</PaneButton>
              <PaneButton type="button">Reports</PaneButton>
            </PaneHeader>
            <DrawingBody>
              <ToolStrip>
                <StripSeparator />
                <StripButton type="button"><CalcIcon />Calc</StripButton>
                <StripSeparator />
                <StripButton type="button"><LetterBox>F</LetterBox>NoDim</StripButton>
                <StripButton type="button"><LetterBox>C</LetterBox>CompD</StripButton>
                <StripButton type="button"><LetterBox>L</LetterBox>LandD</StripButton>
                <StripButton type="button"><BallIcon id="blue" dark="#0b2f78" mid="#3d70c0" light="#8cc8ff" />Dimen1</StripButton>
                <StripButton type="button"><BallIcon id="green" dark="#063806" mid="#2f8a2a" light="#7be03c" />Dimen2</StripButton>
                <StripSeparator />
                <StripButton type="button"><DoneIcon />Done</StripButton>
                <StripSeparator />
                <StripButton type="button"><DotsIcon />Grid</StripButton>
                <StripButton type="button"><PrefIcon />Pref.</StripButton>
              </ToolStrip>
              <Footprint />
            </DrawingBody>
          </DrawingPane>
        </Frame>
      </Workspace>

      <MarkupLayer aria-hidden="true">
        <Pen d="M48 236L53 228 60 228 67 233 70 243 68 270 63 293 55 308 47 310 41 304 40 297 43 267 45 245 48 236" />
        <Pen d="M27 235L27 240 20 252 18 259" />
        <Pen d="M334 505L333 513 325 523 313 528H283L267 521 252 514 238 505 233 493 231 480V420L232 403 240 391 257 377 273 373 287 374 303 380 320 391 327 403 331 430 333 450 337 467 339 490 338 522 332 530 320 531H301" />
      </MarkupLayer>
    </Window>
  );
}
